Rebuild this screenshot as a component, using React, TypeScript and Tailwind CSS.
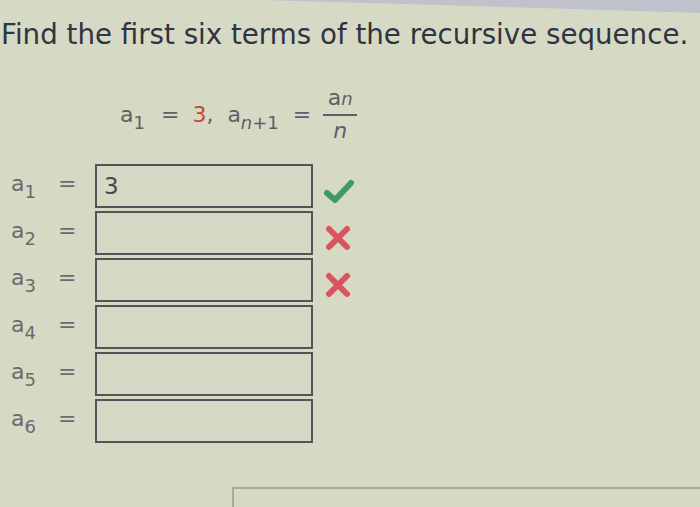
import React from "react";

const Sub = ({ children, italic }: { children: React.ReactNode; italic?: boolean }) => (
  <span className={`relative top-[8px] text-[18px] ${italic ? "italic" : ""}`}>{children}</span>
);

const Check = () => (
  <svg width="30" height="24" viewBox="0 0 30 24">
    <path d="M3 14 L11 21 L27 4" fill="none" stroke="#3f9a62" strokeWidth="6" strokeLinecap="round" strokeLinejoin="round" />
  </svg>
);

const Cross = () => (
  <svg width="28" height="26" viewBox="0 0 28 26">
    <path d="M5 4 L23 22 M23 4 L5 22" fill="none" stroke="#d9545e" strokeWidth="6" strokeLinecap="round" />
  </svg>
);

const rows = [
  { k: "1", v: "3", mark: "check" },
  { k: "2", v: "", mark: "cross" },
  { k: "3", v: "", mark: "cross" },
  { k: "4", v: "", mark: "" },
  { k: "5", v: "", mark: "" },
  { k: "6", v: "", mark: "" },
];

export default function App() {
  return (
    <div className="relative w-[700px] h-[507px] overflow-hidden bg-[#d6d9c3] font-['DejaVu_Sans',sans-serif]">
      <svg className="absolute left-0 top-0" width="700" height="20" viewBox="0 0 700 20">
        <polygon points="260,0 700,0 700,13 440,5" fill="#bfc2cb" />
      </svg>
      <h1 className="pl-[1px] pt-[19px] text-[27.7px] leading-[32px] text-[#2f3441] whitespace-nowrap">
        Find the first six terms of the recursive sequence.
      </h1>
      <div className="ml-[120px] mt-[33px] flex items-center text-[22px] text-[#5c6168] h-[60px]">
        <span>a</span>
        <Sub>1</Sub>
        <span className="ml-[16px]">=</span>
        <span className="ml-[13px] text-[#c8473a]">3</span>
        <span>,</span>
        <span className="ml-[14px]">a</span>
        <Sub italic>n</Sub>
        <Sub>+1</Sub>
        <span className="ml-[14px]">=</span>
        <span className="ml-[12px] flex flex-col items-center">
          <span className="leading-[24px]">
            a<span className="italic text-[18px]">n</span>
          </span>
          <span className="w-[34px] h-[2px] bg-[#5c6168] my-[3px]"></span>
          <span className="italic leading-[24px]">n</span>
        </span>
      </div>
      <div className="ml-[11px] mt-[20px] flex flex-col gap-[3px]">
        {rows.map((r) => (
          <div key={r.k} className="flex items-center h-[44px]">
            <div className="w-[84px] flex items-center text-[22px] text-[#686c71] relative top-[-3px]">
              <span>a</span>
              <Sub>{r.k}</Sub>
              <span className="ml-[22px]">=</span>
            </div>
            <div className="w-[218px] h-[44px] border-2 border-[#505456] flex items-center pl-[7px] text-[23px] text-[#454a4d]">
              {r.v}
            </div>
            <div className="ml-[11px] flex items-center relative top-[5px]">
              {r.mark === "check" && <Check />}
              {r.mark === "cross" && <Cross />}
            </div>
          </div>
        ))}
      </div>
      <div className="ml-[232px] mt-[44px] h-[40px] border-t-2 border-l-2 border-[#a5a9a8]"></div>
    </div>
  );
}
